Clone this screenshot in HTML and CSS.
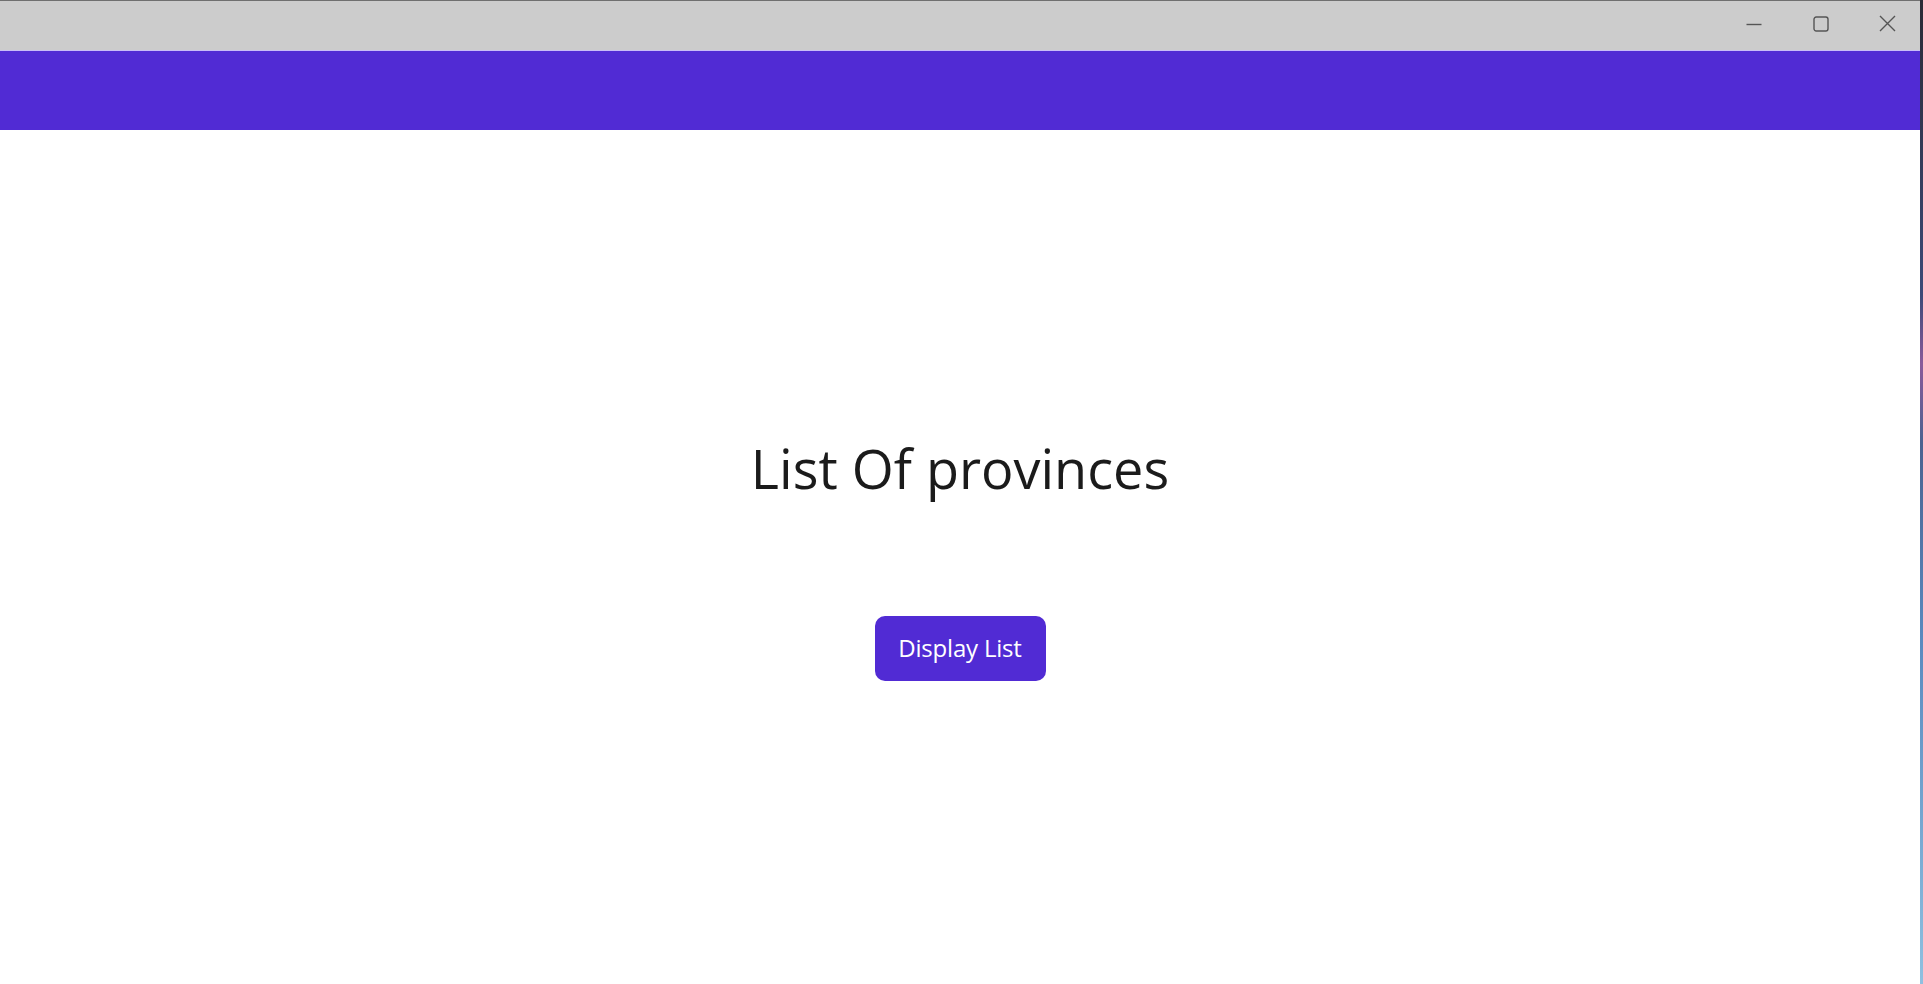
FILE: index.html
```html
<!DOCTYPE html>
<html lang="en">
<head>
<meta charset="utf-8">
<title>List Of provinces</title>
<link rel="stylesheet" href="styles.css">
</head>
<body>
<div class="screen">
  <div class="window">
    <div class="titlebar">
      <div class="caption-buttons">
        <button class="caption-btn" aria-label="Minimize">
          <svg width="16" height="16" viewBox="0 0 16 16"><path d="M0.5 8.5h15" stroke="#555" stroke-width="1.4"/></svg>
        </button>
        <button class="caption-btn" aria-label="Maximize">
          <svg width="16" height="16" viewBox="0 0 16 16"><rect x="1" y="1" width="14" height="14" rx="2.2" fill="none" stroke="#555" stroke-width="1.4"/></svg>
        </button>
        <button class="caption-btn close" aria-label="Close">
          <svg width="17" height="17" viewBox="0 0 17 17"><path d="M1 1L16 16M16 1L1 16" stroke="#555" stroke-width="1.4"/></svg>
        </button>
      </div>
    </div>
    <div class="navbar"></div>
    <main class="content">
      <h1 class="heading">List Of provinces</h1>
      <button class="primary-btn">Display List</button>
    </main>
  </div>
  <div class="desktop-edge"></div>
</div>
</body>
</html>
```
FILE: styles.css
```css
html, body {
  margin: 0;
  padding: 0;
  height: 100%;
}

body {
  font-family: "Open Sans", "Noto Sans", sans-serif;
  background: #ffffff;
  overflow: hidden;
}

.screen {
  display: flex;
  height: 984px;
  width: 1923px;
}

.window {
  width: 1920px;
  display: flex;
  flex-direction: column;
  background: #ffffff;
}

.titlebar {
  height: 49px;
  background: #cccccc;
  border-top: 1px solid #6f6f6f;
  display: flex;
  justify-content: flex-end;
}

.caption-buttons {
  display: flex;
}

.caption-btn {
  width: 67px;
  height: 42px;
  border: none;
  background: transparent;
  display: flex;
  align-items: center;
  justify-content: center;
  padding: 3px 0 0;
}

.caption-btn.close {
  width: 66px;
}

.navbar {
  height: 80px;
  background: #512bd4;
  border-top: 1px solid #c9bdf7;
  box-sizing: border-box;
}

.content {
  flex: 1;
  display: flex;
  flex-direction: column;
  align-items: center;
}

.heading {
  margin: 302px 0 0;
  font-size: 54px;
  font-weight: 400;
  color: #1b1b1b;
  line-height: 72px;
}

.primary-btn {
  margin-top: 112px;
  width: 171px;
  height: 65px;
  border: none;
  border-radius: 10px;
  background: #512bd4;
  color: #ffffff;
  font-family: "Open Sans", "Noto Sans", sans-serif;
  font-size: 24px;
  letter-spacing: -0.2px;
  padding: 0 0 2px;
}

.desktop-edge {
  width: 3px;
  background: linear-gradient(#2a2a35 0%, #3c4a78 30%, #8a5a9a 37%, #4a6290 45%, #5a8abf 65%, #8fc0e0 100%);
}
```
